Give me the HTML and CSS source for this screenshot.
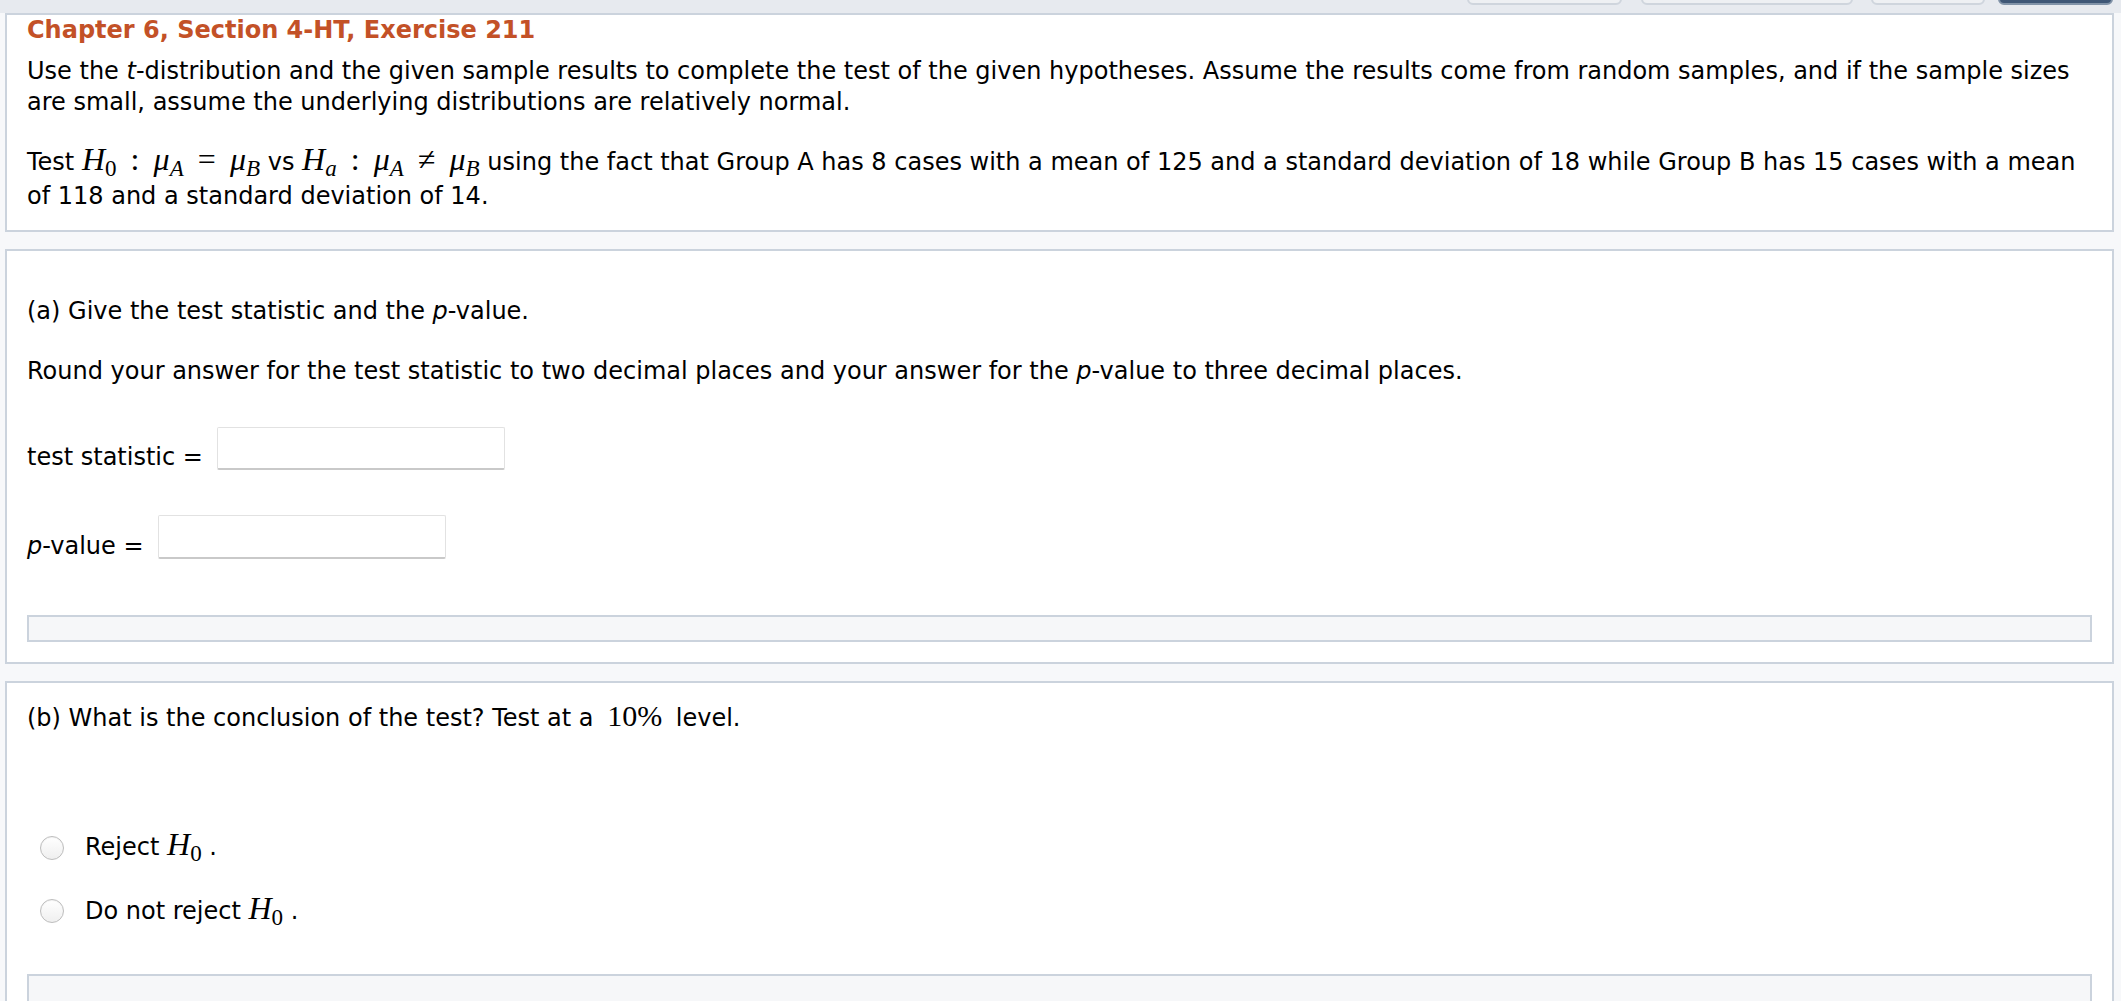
FILE: index.html
```html
<!DOCTYPE html>
<html lang="en">
<head>
<meta charset="utf-8">
<title>Chapter 6, Section 4-HT, Exercise 211</title>
<link rel="stylesheet" href="styles.css">
</head>
<body>
<div class="topbar">
  <span class="tbtn tbtn-1"></span>
  <span class="tbtn tbtn-2"></span>
  <span class="tbtn tbtn-3"></span>
  <span class="tbtn tbtn-dark"></span>
</div>

<section class="card card-intro">
  <h1 class="title">Chapter 6, Section 4-HT, Exercise 211</h1>
  <p class="para">Use the <i>t</i>-distribution and the given sample results to complete the test of the given hypotheses. Assume the results come from random samples, and if the sample sizes are small, assume the underlying distributions are relatively normal.</p>
  <p class="para para-math">Test <span class="math"><i>H</i><sub>0</sub><span class="rel">:</span><i>μ</i><sub><i>A</i></sub><span class="rel">=</span><i>μ</i><sub><i>B</i></sub></span> vs <span class="math"><i>H</i><sub><i>a</i></sub><span class="rel">:</span><i>μ</i><sub><i>A</i></sub><span class="rel">≠</span><i>μ</i><sub><i>B</i></sub></span> using the fact that Group A has 8 cases with a mean of 125 and a standard deviation of 18 while Group B has 15 cases with a mean of 118 and a standard deviation of 14.</p>
</section>

<section class="card card-a">
  <p class="para">(a) Give the test statistic and the <i>p</i>-value.</p>
  <p class="para round">Round your answer for the test statistic to two decimal places and your answer for the <i>p</i>-value to three decimal places.</p>
  <div class="answer-row row-stat">
    <span class="answer-label">test statistic =</span>
    <span class="answer-box"></span>
  </div>
  <div class="answer-row row-p">
    <span class="answer-label"><i>p</i>-value =</span>
    <span class="answer-box"></span>
  </div>
  <div class="feedback"></div>
</section>

<section class="card card-b">
  <p class="para">(b) What is the conclusion of the test? Test at a <span class="math num">10%</span> level.</p>
  <div class="choices">
    <label class="choice"><span class="radio"></span><span>Reject <span class="math"><i>H</i><sub>0</sub></span> .</span></label>
    <label class="choice"><span class="radio"></span><span>Do not reject <span class="math"><i>H</i><sub>0</sub></span> .</span></label>
  </div>
  <div class="feedback feedback-tall"></div>
</section>
</body>
</html>
```

FILE: styles.css
```css
html, body {
  margin: 0;
  padding: 0;
}
body {
  background: #f7f8fa;
  font-family: "DejaVu Sans", Verdana, sans-serif;
  font-size: 24px;
  line-height: 31.5px;
  color: #000;
  padding: 0 7px 0 5px;
  overflow: hidden;
  height: 1001px;
  box-sizing: border-box;
}

/* top toolbar strip (only the bottoms of its buttons are visible) */
.topbar {
  height: 13px;
  margin: 0 -7px 0 -5px;
  background: #e7eaef;
  display: flex;
  justify-content: flex-end;
  align-items: flex-end;
  padding-right: 8px;
  padding-bottom: 8px;
  box-sizing: border-box;
  overflow: hidden;
}
.tbtn {
  display: block;
  height: 30px;
  flex: none;
  border: 2px solid #cfd5dd;
  border-radius: 6px;
  background: #eef0f3;
  box-sizing: border-box;
}
.tbtn-1 { width: 155px; margin-right: 19px; }
.tbtn-2 { width: 212px; margin-right: 18px; }
.tbtn-3 { width: 114px; margin-right: 13px; height: 33px; }
.tbtn-dark {
  width: 115px;
  background: #3f5776;
  border-color: #8193a8;
}

/* cards */
.card {
  background: #fff;
  border: 2px solid #cbd3dd;
  padding: 0 20px;
}
.card-intro {
  padding-top: 0;
  padding-bottom: 17px;
}
.card-a {
  margin-top: 17px;
  padding-top: 45px;
  padding-bottom: 20px;
}
.card-b {
  margin-top: 17px;
  padding-top: 20px;
}

.title {
  margin: 0;
  font-size: 24px;
  font-weight: bold;
  line-height: 31.5px;
  color: #c35127;
}
.para {
  margin: 0;
}
.card-intro .para {
  margin-top: 9px;
}
.card-intro .para-math {
  margin-top: 26px;
  line-height: 34px;
}
.round {
  margin-top: 29px;
}

/* math */
.math {
  font-family: "Liberation Serif", "Times New Roman", serif;
  font-size: 32px;
  line-height: 0;
}
.math i {
  font-style: italic;
}
.math sub {
  font-size: 0.72em;
  vertical-align: -0.26em;
  line-height: 0;
}
.math .rel {
  display: inline-block;
  margin: 0 0.44em;
  font-style: normal;
}
.math.num {
  font-size: 30px;
  margin: 0 6px;
}

/* answer rows */
.answer-row {
  display: flex;
  align-items: flex-end;
}
.row-stat {
  margin-top: 39px;
}
.row-p {
  margin-top: 45px;
}
.answer-label {
  line-height: 26px;
}
.answer-box {
  display: block;
  width: 288px;
  height: 43px;
  margin-left: 14px;
  background: #fff;
  border: 1px solid #e2e2e2;
  border-bottom: 2px solid #c9c9c9;
  border-radius: 2px;
  box-sizing: border-box;
}
.row-p .answer-box {
  height: 44px;
}

.feedback {
  height: 27px;
  margin-top: 56px;
  background: #f6f7f9;
  border: 2px solid #cbd3dd;
  box-sizing: border-box;
}
.feedback-tall {
  height: 60px;
}

/* choices */
.choices {
  margin-top: 98px;
  padding-left: 13px;
  display: flex;
  flex-direction: column;
  gap: 32px;
}
.choice {
  display: flex;
  align-items: center;
}
.radio {
  width: 24px;
  height: 24px;
  flex: none;
  border-radius: 50%;
  border: 1px solid #bdbdbd;
  background: linear-gradient(#ffffff, #efefef);
  box-shadow: inset 0 1px 1px rgba(0,0,0,0.05);
  box-sizing: border-box;
  margin-right: 21px;
}
.card-b .feedback {
  margin-top: 47px;
}
```
